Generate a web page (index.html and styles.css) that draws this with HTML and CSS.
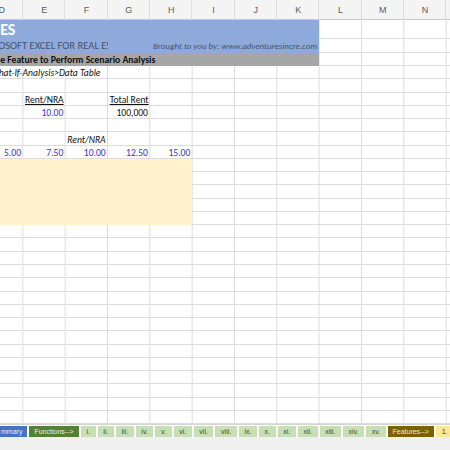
FILE: index.html
```html
<!DOCTYPE html>
<html>
<head>
<meta charset="utf-8">
<link rel="stylesheet" href="styles.css">
</head>
<body>
<div class="app">
  <div class="sheet">
    <div class="inner">
      <div class="hdr">
        <div>D</div><div>E</div><div>F</div><div>G</div><div>H</div><div>I</div><div>J</div><div>K</div><div>L</div><div>M</div><div>N</div><div></div>
      </div>
      <div class="row r19">
        <div class="fill blue band8"></div>
        <div class="c title band8">ES</div>
      </div>
      <div class="row r14">
        <div class="fill blue band8"></div>
        <div class="c sub colDF">OSOFT EXCEL FOR REAL ES</div>
        <div class="c credit colGK">Brought to you by: www.adventuresincre.com</div>
      </div>
      <div class="row r13">
        <div class="fill gray band8"></div>
        <div class="c heading band8">e Feature to Perform Scenario Analysis</div>
      </div>
      <div class="row">
        <div class="c path span6">hat-If-Analysis&gt;Data Table</div>
      </div>
      <div class="row"></div>
      <div class="row">
        <div class="c num u colE">Rent/NRA</div>
        <div class="c num u colG">Total Rent</div>
      </div>
      <div class="row">
        <div class="c num blue-t colE">10.00</div>
        <div class="c num colG">100,000</div>
      </div>
      <div class="row"></div>
      <div class="row">
        <div class="c center it colF">Rent/NRA</div>
      </div>
      <div class="row">
        <div class="c num blue-t">5.00</div>
        <div class="c num blue-t">7.50</div>
        <div class="c num blue-t">10.00</div>
        <div class="c num blue-t">12.50</div>
        <div class="c num blue-t">15.00</div>
      </div>
      <div class="row"><div class="fill yellow band5"></div></div>
      <div class="row"><div class="fill yellow band5"></div></div>
      <div class="row"><div class="fill yellow band5"></div></div>
      <div class="row"><div class="fill yellow band5"></div></div>
      <div class="row"><div class="fill yellow band5"></div></div>
      <div class="row"></div>
      <div class="row"></div>
      <div class="row"></div>
      <div class="row"></div>
      <div class="row"></div>
      <div class="row"></div>
      <div class="row"></div>
      <div class="row"></div>
      <div class="row"></div>
      <div class="row"></div>
      <div class="row"></div>
      <div class="row"></div>
      <div class="row"></div>
      <div class="row"></div>
      <div class="row"></div>
    </div>
  </div>
  <div class="tabs">
    <div class="tab sum">mmary</div>
    <div class="tab fn">Functions--&gt;</div>
    <div class="tab">i.</div>
    <div class="tab">ii.</div>
    <div class="tab">iii.</div>
    <div class="tab">iv.</div>
    <div class="tab">v.</div>
    <div class="tab">vi.</div>
    <div class="tab">vii.</div>
    <div class="tab">viii.</div>
    <div class="tab">ix.</div>
    <div class="tab">x.</div>
    <div class="tab">xi.</div>
    <div class="tab">xii.</div>
    <div class="tab">xiii.</div>
    <div class="tab">xiv.</div>
    <div class="tab">xv.</div>
    <div class="tab feat">Features--&gt;</div>
    <div class="tab one">1.</div>
  </div>
  <div class="status"></div>
</div>
</body>
</html>
```

FILE: styles.css
```css
html, body {
  margin: 0;
  padding: 0;
  background: #ffffff;
}

.app {
  width: 450px;
  height: 450px;
  display: flex;
  flex-direction: column;
  overflow: hidden;
  font-family: Carlito, Calibri, "Liberation Sans", Arial, sans-serif;
}

.sheet {
  flex: none;
  height: 424px;
  overflow: hidden;
}

.inner {
  margin-left: -19.333px;
  width: 508px;
}

.hdr {
  display: grid;
  grid-template-columns: repeat(12, 42.333px);
  height: 20px;
  box-sizing: border-box;
  background: #f4f4f4;
  border-bottom: 1px solid #c9c9c9;
}

.hdr div {
  font-family: "Liberation Sans", Arial, sans-serif;
  font-size: 9px;
  line-height: 20px;
  color: #5b5b5b;
  text-align: center;
  box-shadow: inset -1px 0 0 #dcdcdc;
}

.row {
  display: grid;
  grid-template-columns: repeat(12, 42.333px);
  grid-template-rows: 100%;
  height: 13.27px;
  background-image:
    linear-gradient(to top, #dcdcdc 1px, transparent 1px),
    linear-gradient(to right, transparent calc(100% - 1px), #dcdcdc calc(100% - 1px));
  background-size: 100% 100%, 42.333px 100%;
  background-repeat: no-repeat, repeat-x;
}

.r19 { height: 19px; }
.r14 { height: 14px; }
.r13 { height: 13px; }

.fill { grid-row: 1; }
.blue { background: #8eaadb; }
.gray { background: #a6a6a6; }
.yellow { background: #fff2cc; }

.band8 { grid-column: 1 / 9; }
.band5 { grid-column: 1 / 6; }
.span6 { grid-column: 1 / 7; }
.colDF { grid-column: 1 / 4; }
.colGK { grid-column: 4 / 9; }
.colE { grid-column: 2; }
.colF { grid-column: 3; }
.colG { grid-column: 4; }

.c {
  grid-row: 1;
  font-size: 9.6px;
  line-height: 12px;
  align-self: end;
  padding: 0 2px;
  white-space: nowrap;
  overflow: hidden;
  color: #111111;
}

.title {
  align-self: center;
  font-size: 16px;
  line-height: 19px;
  font-weight: bold;
  color: #ffffff;
  padding-left: 19.5px;
}

.sub {
  padding-left: 17.5px;
  color: #45546e;
  font-size: 10.6px;
  line-height: 14px;
}

.credit {
  text-align: right;
  font-style: italic;
  color: #45546e;
  font-size: 8.9px;
  line-height: 13px;
}

.heading {
  font-weight: bold;
  font-size: 9.7px;
  padding-left: 19.5px;
  color: #111111;
}

.path {
  font-style: italic;
  padding-left: 18px;
}

.num { text-align: right; }
.center { text-align: center; }
.it { font-style: italic; }
.u { text-decoration: underline; }
.blue-t { color: #3535c4; }

.tabs {
  flex: none;
  height: 13px;
  box-sizing: border-box;
  border-top: 1px solid #d6d6d6;
  padding-top: 1px;
  display: flex;
  gap: 2px;
  align-items: flex-start;
  overflow: hidden;
  background: #ffffff;
}

.tab {
  flex: none;
  height: 11px;
  line-height: 11px;
  padding: 0 5.6px;
  font-family: "Liberation Sans", Arial, sans-serif;
  font-size: 7px;
  background: #c6e0b4;
  color: #3d4b33;
  white-space: nowrap;
}

.tab.sum {
  background: #4472c4;
  color: #e8eefa;
  width: 27px;
  padding: 0 0 0 1px;
  box-sizing: border-box;
}

.tab.fn {
  background: #548235;
  color: #e6efe0;
  width: 50px;
  box-sizing: border-box;
  padding: 0;
  text-align: center;
}

.tab.feat {
  background: #7f6000;
  color: #f3ead0;
  width: 46px;
  box-sizing: border-box;
  padding: 0;
  text-align: center;
}

.tab.one {
  background: #ffe699;
  color: #4a4020;
  padding: 0 2px 0 6px;
}

.status {
  flex: 1;
  background: #f0f0f0;
}
```
